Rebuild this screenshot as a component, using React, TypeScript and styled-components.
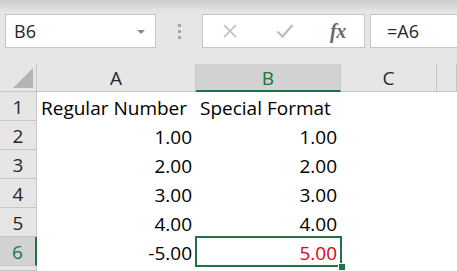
import React from "react";
import styled, { createGlobalStyle } from "styled-components";

const GlobalStyle = createGlobalStyle`
  html, body {
    margin: 0;
    padding: 0;
    background: #e6e6e6;
    overflow: hidden;
  }
  body {
    font-family: "Open Sans", "Noto Sans", sans-serif;
  }
`;

const Page = styled.div`
  width: 457px;
  height: 271px;
  display: flex;
  flex-direction: column;
  overflow: hidden;
`;

const RibbonEdge = styled.div`
  flex: none;
  height: 14px;
  background: linear-gradient(#cdcdcd, #e4e4e4 80%, #e6e6e6);
`;

const FormulaBar = styled.div`
  flex: none;
  display: flex;
  height: 34px;
  padding-left: 5px;
  margin-bottom: 16px;
`;

const Box = styled.div<{ $w?: number }>`
  box-sizing: border-box;
  height: 100%;
  background: #fff;
  border: 1px solid #c6c6c6;
  display: flex;
  align-items: center;
  ${(p) => (p.$w ? `width: ${p.$w}px; flex: none;` : "flex: 1; border-right: none;")}
`;

const NameText = styled.span`
  flex: 1;
  padding-left: 8px;
  font-size: 18px;
  color: #262626;
`;

const DropArrow = styled.span`
  width: 0;
  height: 0;
  border-left: 4px solid transparent;
  border-right: 4px solid transparent;
  border-top: 4px solid #8a8a8a;
  margin-right: 10px;
  margin-top: 2px;
`;

const Grip = styled.div`
  width: 46px;
  display: flex;
  flex-direction: column;
  align-items: center;
  justify-content: center;
  gap: 3px;

  span {
    width: 3px;
    height: 3px;
    background: #a6a6a6;
  }
`;

const FxButtons = styled(Box)`
  padding-left: 19px;
`;

const IconSlot = styled.div<{ $w: number }>`
  width: ${(p) => p.$w}px;
  display: flex;
  align-items: center;
  justify-content: flex-start;
`;

const FxText = styled.span`
  font-family: "Liberation Serif", "DejaVu Serif", serif;
  font-style: italic;
  font-weight: bold;
  font-size: 20px;
  color: #6a6a6a;
  letter-spacing: -0.5px;
`;

const InputGap = styled.div`
  width: 5px;
`;

const FormulaText = styled.span`
  padding-left: 16px;
  font-size: 18px;
  color: #262626;
`;

const Sheet = styled.div`
  flex: 1;
  min-height: 0;
  overflow: hidden;
  display: grid;
  grid-template-columns: 37px 159px 145px 96px 1fr;
  grid-template-rows: 28px repeat(6, 29px) minmax(0, 1fr);
  background: #fff;
  line-height: 22px;
`;

const Corner = styled.div`
  background: #e6e6e6;
  border-right: 1px solid #c6c6c6;
  border-bottom: 1px solid #c6c6c6;
  display: flex;
  align-items: flex-end;
  justify-content: flex-end;
  padding: 0 3px 3px 0;
  box-sizing: border-box;

  &::after {
    content: "";
    width: 0;
    height: 0;
    border-left: 20px solid transparent;
    border-bottom: 20px solid #b4b4b4;
  }
`;

const ColHead = styled.div<{ $active?: boolean }>`
  box-sizing: border-box;
  background: ${(p) => (p.$active ? "#d2d2d2" : "#e6e6e6")};
  color: ${(p) => (p.$active ? "#217346" : "#262626")};
  border-right: 1px solid #c6c6c6;
  border-bottom: ${(p) => (p.$active ? "2px solid #217346" : "1px solid #c6c6c6")};
  font-size: 19px;
  display: flex;
  align-items: flex-end;
  justify-content: center;
  padding-bottom: ${(p) => (p.$active ? 1 : 2)}px;
`;

const RowHead = styled.div<{ $active?: boolean }>`
  box-sizing: border-box;
  min-height: 0;
  background: ${(p) => (p.$active ? "#d2d2d2" : "#e6e6e6")};
  color: ${(p) => (p.$active ? "#217346" : "#262626")};
  border-right: ${(p) => (p.$active ? "2px solid #217346" : "1px solid #c6c6c6")};
  border-bottom: 1px solid #c6c6c6;
  font-size: 19px;
  display: flex;
  align-items: flex-end;
  justify-content: center;
  padding-bottom: 2px;
`;

const Cell = styled.div<{ $align?: "left" | "right"; $red?: boolean; $selected?: boolean }>`
  position: relative;
  min-height: 0;
  box-sizing: border-box;
  font-size: 19px;
  color: ${(p) => (p.$red ? "#e0000f" : "#000")};
  display: flex;
  align-items: flex-end;
  justify-content: ${(p) => (p.$align === "right" ? "flex-end" : "flex-start")};
  padding: 0 4px 2px 4px;
  white-space: nowrap;

  ${(p) =>
    p.$selected &&
    `
    &::after {
      content: "";
      position: absolute;
      left: -1px;
      top: -1px;
      right: -1px;
      bottom: -1px;
      border: 2px solid #217346;
      pointer-events: none;
    }
    &::before {
      content: "";
      position: absolute;
      right: -4px;
      bottom: -4px;
      width: 6px;
      height: 6px;
      background: #217346;
      border-left: 1px solid #fff;
      border-top: 1px solid #fff;
      z-index: 2;
    }
  `}
`;

const XIcon = () => (
  <svg width="16" height="16" viewBox="0 0 16 16">
    <path d="M2 2 L14 14 M14 2 L2 14" stroke="#bdbdbd" strokeWidth="1.6" fill="none" />
  </svg>
);

const CheckIcon = () => (
  <svg width="18" height="16" viewBox="0 0 18 16">
    <path d="M1.5 8.5 L6.5 13.5 L16.5 2" stroke="#bdbdbd" strokeWidth="2.4" fill="none" />
  </svg>
);

type Row = { a: string; b: string; align: "left" | "right" };

const rows: Row[] = [
  { a: "Regular Number", b: "Special Format", align: "left" },
  { a: "1.00", b: "1.00", align: "right" },
  { a: "2.00", b: "2.00", align: "right" },
  { a: "3.00", b: "3.00", align: "right" },
  { a: "4.00", b: "4.00", align: "right" },
  { a: "-5.00", b: "5.00", align: "right" },
];

export default function App() {
  return (
    <Page>
      <GlobalStyle />
      <RibbonEdge />
      <FormulaBar>
        <Box $w={151}>
          <NameText>B6</NameText>
          <DropArrow />
        </Box>
        <Grip>
          <span />
          <span />
          <span />
        </Grip>
        <FxButtons $w={163}>
          <IconSlot $w={54}>
            <XIcon />
          </IconSlot>
          <IconSlot $w={54}>
            <CheckIcon />
          </IconSlot>
          <IconSlot $w={30}>
            <FxText>fx</FxText>
          </IconSlot>
        </FxButtons>
        <InputGap />
        <Box>
          <FormulaText>=A6</FormulaText>
        </Box>
      </FormulaBar>

      <Sheet>
        <Corner />
        <ColHead>A</ColHead>
        <ColHead $active>B</ColHead>
        <ColHead>C</ColHead>
        <ColHead />

        {rows.map((r, i) => {
          const n = i + 1;
          const active = n === 6;
          return (
            <React.Fragment key={n}>
              <RowHead $active={active}>{n}</RowHead>
              <Cell $align={r.align}>{r.a}</Cell>
              <Cell $align={r.align} $red={active} $selected={active}>
                {r.b}
              </Cell>
              <Cell />
              <Cell />
            </React.Fragment>
          );
        })}
        <RowHead />
        <Cell />
        <Cell />
        <Cell />
        <Cell />
      </Sheet>
    </Page>
  );
}
